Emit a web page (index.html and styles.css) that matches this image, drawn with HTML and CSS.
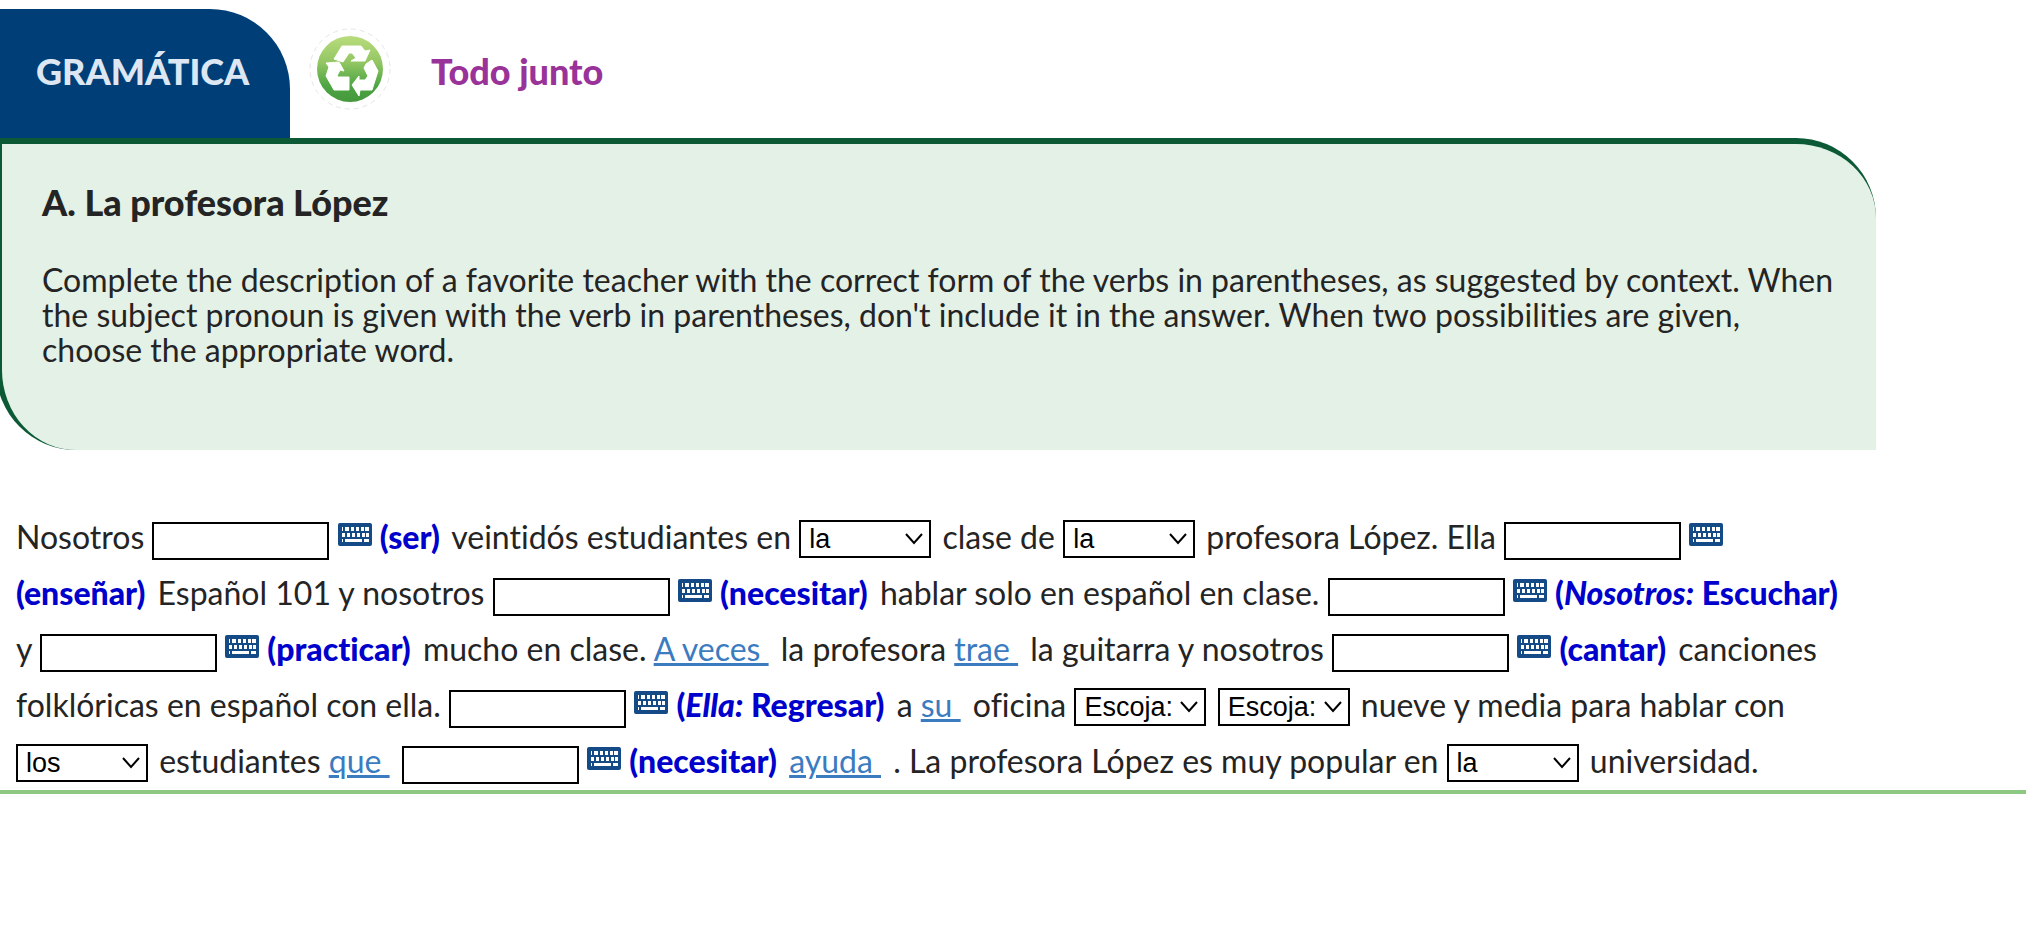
FILE: index.html
```
<!DOCTYPE html>
<html lang="es">
  <head>
    <meta charset="UTF-8" />
    <meta name="viewport" content="width=device-width, initial-scale=1.0" />
    <title>Todo junto</title>
    <link rel="stylesheet" href="styles.css">
  </head>
  <body>
    <!-- shared keyboard icon -->
    <svg class="sprite" aria-hidden="true">
      <symbol id="keyboard" viewBox="0 0 34 24">
        <rect width="34" height="23" rx="2" fill="#144a86" />
        <path
          fill="#fff"
          d="M4 4h1v4H4zM7 4h4v4H7zM13 4h3v4h-3zM18 4h3v4h-3zM23 4h3v4h-3zM27 4h4v4h-4zM4 10h3v4H4zM9 10h3v4H9zM14 10h3v4h-3zM19 10h3v4h-3zM24 10h3v4h-3zM28 10h3v4h-3zM4 16h1v3H4zM7 16h17v3H7zM26 16h5v3h-5z"
        />
      </symbol>
    </svg>

    <header class="page-header">
      <div class="tab">GRAMÁTICA</div>
      <svg class="recycle" viewBox="0 0 84 84" role="img" aria-label="Recycle">
        <defs>
          <linearGradient id="green" x1="0" y1="0" x2="0" y2="1">
            <stop offset="0" stop-color="#b9dc7c" />
            <stop offset="0.4" stop-color="#93c663" />
            <stop offset="0.75" stop-color="#4ea544" />
            <stop offset="1" stop-color="#44993a" />
          </linearGradient>
        </defs>
        <circle cx="42" cy="42" r="40" fill="#fff" stroke="#e6e6e6" stroke-dasharray="5 4" />
        <circle cx="42" cy="42" r="33" fill="url(#green)" />
        <g fill="#fff" stroke="#fff" stroke-linejoin="round">
          <path d="M26 32l8-13h19l4 5 5-1-5 11-14 0 5-3-4-5-3 0-6 9z" />
          <path d="M18 36l13-1 5 9-4-1-3 6 1 1h11v13H26l-8-14 3-9z" />
          <path d="M58 37l6-4 6 11-6 19H52l-1 6-7-11 7-9v4h6l3-4-4-8z" />
        </g>
      </svg>
      <h1>Todo junto</h1>
    </header>

    <section class="instructions">
      <h2>A. La profesora López</h2>
      <p>
        Complete the description of a favorite teacher with the correct form of
        the verbs in parentheses, as suggested by context. When the subject
        pronoun is given with the verb in parentheses, don't include it in the
        answer. When two possibilities are given, choose the appropriate word.
      </p>
    </section>

    <form class="exercise">
      Nosotros
      <input type="text" aria-label="ser" />
      <button type="button" aria-label="Keyboard"><svg><use href="#keyboard" /></svg></button>
      <b>(ser)</b> veintidós estudiantes en
      <select aria-label="artículo 1"><option>la</option><option>las</option></select>
      clase de
      <select aria-label="artículo 2"><option>la</option><option>las</option></select>
      profesora López. Ella
      <input type="text" aria-label="enseñar" />
      <button type="button" aria-label="Keyboard"><svg><use href="#keyboard" /></svg></button>
      <br />
      <b>(enseñar)</b> Español 101 y nosotros
      <input type="text" aria-label="necesitar" />
      <button type="button" aria-label="Keyboard"><svg><use href="#keyboard" /></svg></button>
      <b>(necesitar)</b> hablar solo en español en clase.
      <input type="text" aria-label="escuchar" />
      <button type="button" aria-label="Keyboard"><svg><use href="#keyboard" /></svg></button>
      <b>(<i>Nosotros:</i> Escuchar)</b>
      <br />
      y
      <input type="text" aria-label="practicar" />
      <button type="button" aria-label="Keyboard"><svg><use href="#keyboard" /></svg></button>
      <b>(practicar)</b> mucho en clase. <a href="#">A veces&nbsp;</a>
      la profesora <a href="#">trae&nbsp;</a> la guitarra y nosotros
      <input type="text" aria-label="cantar" />
      <button type="button" aria-label="Keyboard"><svg><use href="#keyboard" /></svg></button>
      <b>(cantar)</b> canciones
      <br />
      folklóricas en español con ella.
      <input type="text" aria-label="regresar" />
      <button type="button" aria-label="Keyboard"><svg><use href="#keyboard" /></svg></button>
      <b>(<i>Ella:</i> Regresar)</b> a <a href="#">su&nbsp;</a> oficina
      <select aria-label="preposición"><option>Escoja:</option><option>a</option><option>de</option></select>
      <select aria-label="artículo 3"><option>Escoja:</option><option>la</option><option>las</option></select>
      nueve y media para hablar con
      <br />
      <select aria-label="artículo 4"><option>los</option><option>las</option></select>
      estudiantes <a href="#">que&nbsp;</a>
      <input type="text" aria-label="necesitar 2" />
      <button type="button" aria-label="Keyboard"><svg><use href="#keyboard" /></svg></button>
      <b>(necesitar)</b> <a href="#">ayuda&nbsp;</a> . La profesora López
      es muy popular en
      <select aria-label="artículo 5"><option>la</option><option>las</option></select>
      universidad.
    </form>
  </body>
</html>
```
FILE: styles.css
```
body {
  margin: 0;
  padding-top: 9px;
  font-family: Lato, sans-serif;
  font-size: 32px;
  font-variant-ligatures: none;
  color: #242424;
  background-color: #fff;
  overflow-x: hidden;
}
.sprite {
  display: none;
}
.page-header {
  display: flex;
  align-items: flex-start;
}
.tab {
  box-sizing: border-box;
  width: 290px;
  height: 129px;
  padding-left: 36px;
  border-top-right-radius: 80px;
  background-color: #003e78;
  color: #dce7f3;
  font-size: 36px;
  font-weight: 900;
  line-height: 124px;
}
.recycle {
  width: 84px;
  height: 84px;
  margin: 18px 39px 0 18px;
}
.page-header h1 {
  margin: 0;
  color: #993399;
  font-size: 36px;
  font-weight: 900;
  line-height: 124px;
}
.instructions {
  box-sizing: border-box;
  min-height: 312px;
  margin: 0 150px 0 -4px;
  padding: 36px 40px;
  border-top: 6px solid #0b5a35;
  border-left: 6px solid #0b5a35;
  border-top-right-radius: 80px;
  border-bottom-left-radius: 80px;
  background-color: #e4f1e7;
}
.instructions h2 {
  margin: 0 0 38px;
  font-size: 36px;
  font-weight: 900;
  line-height: 44px;
}
.instructions p {
  margin: 0;
  line-height: 35px;
}
.exercise {
  margin-top: 59px;
  padding: 0 16px 1px;
  border-bottom: 4px solid #8dc883;
  line-height: 56px;
}
.exercise b {
  margin-right: 4px;
  color: #0000cc;
  font-weight: 900;
}
.exercise a {
  margin-right: 4px;
  color: #3b7bbf;
  text-decoration: underline;
  text-decoration-thickness: 3px;
}
.exercise input,
.exercise select {
  box-sizing: border-box;
  height: 38px;
  margin: 0;
  border: 2px solid #000;
  border-radius: 0;
  background-color: #fff;
  color: #000;
  font-family: "Liberation Sans", Arial, sans-serif;
  font-size: 27px;
}
.exercise input {
  width: 177px;
  padding: 0 8px;
  vertical-align: baseline;
}
.exercise select {
  width: 132px;
  margin-right: 3px;
  padding: 0 8px;
  appearance: none;
  background-image: url("data:image/svg+xml,%3Csvg xmlns='http://www.w3.org/2000/svg' width='18' height='12'%3E%3Cpath d='M1 1l8 9 8-9' fill='none' stroke='%23000' stroke-width='2'/%3E%3C/svg%3E");
  background-repeat: no-repeat;
  background-position: right 6px center;
  vertical-align: 1px;
}
.exercise button {
  margin: 0;
  padding: 0;
  border: none;
  background: none;
  line-height: 0;
  vertical-align: 2px;
  cursor: pointer;
}
.exercise button svg {
  width: 34px;
  height: 24px;
}
```
